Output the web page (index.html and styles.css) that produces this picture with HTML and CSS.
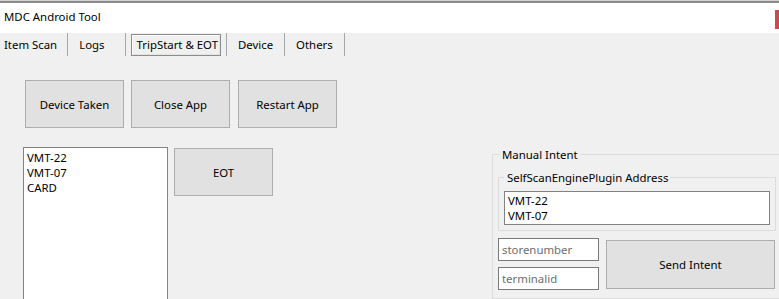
FILE: index.html
```html
<!DOCTYPE html>
<html>
<head>
<meta charset="utf-8">
<link rel="stylesheet" href="styles.css">
</head>
<body>
<div class="frame-top"></div>
<header class="titlebar">
  <span class="title">MDC Android Tool</span>
  <span class="marker"></span>
</header>
<nav class="tabs">
  <div class="tab tab-first">Item Scan</div>
  <div class="tab tab-logs">Logs</div>
  <div class="tab tab-sel"><span class="sel-box">TripStart &amp; EOT</span></div>
  <div class="tab">Device</div>
  <div class="tab">Others</div>
</nav>
<main class="page">
  <div class="btn-row">
    <button class="btn">Device Taken</button>
    <button class="btn">Close App</button>
    <button class="btn">Restart App</button>
  </div>
  <div class="lower">
    <div class="listbox list-main">
      <div>VMT-22</div>
      <div>VMT-07</div>
      <div>CARD</div>
    </div>
    <button class="btn btn-eot">EOT</button>
    <fieldset class="group">
      <legend class="legend">Manual Intent</legend>
      <fieldset class="subgroup">
        <legend class="legend sub-legend">SelfScanEnginePlugin Address</legend>
        <div class="listbox list-small">
          <div>VMT-22</div>
          <div>VMT-07</div>
        </div>
      </fieldset>
      <div class="intent-row">
        <div class="inputs">
          <input class="field" placeholder="storenumber">
          <input class="field" placeholder="terminalid">
        </div>
        <button class="btn btn-send">Send Intent</button>
      </div>
    </fieldset>
  </div>
</main>
</body>
</html>
```
FILE: styles.css
```css
html, body {
  margin: 0;
  padding: 0;
}
body {
  width: 779px;
  height: 299px;
  overflow: hidden;
  background: #f0f0f0;
  font-family: "Noto Sans", "Liberation Sans", sans-serif;
  font-size: 11.4px;
  color: #000;
}
.frame-top {
  height: 1px;
  background: #d2d2d2;
  border-bottom: 2px solid #8a8a8a;
}
.titlebar {
  height: 30px;
  background: #fff;
  display: flex;
  justify-content: space-between;
  align-items: flex-start;
}
.title {
  margin: 6px 0 0 4px;
  line-height: 16px;
}
.marker {
  width: 4px;
  height: 19px;
  margin-top: 7px;
  background: #c94c4c;
}
.tabs {
  height: 23px;
  display: flex;
}
.tab {
  padding: 0 11px;
  line-height: 23px;
  border-right: 1px solid #a7a7a7;
}
.tab-first {
  padding-left: 4px;
  padding-right: 10px;
}
.tab-logs {
  padding-right: 20px;
}
.tab-sel {
  padding: 1px 5px 0 5px;
  display: flex;
}
.sel-box {
  padding: 0 2px 0 5px;
  line-height: 19px;
  border: 1px solid #8c8c8c;
  box-shadow: inset 1px 1px 0 #fdfdfd, inset -1px -1px 0 #e3e3e3;
}
.page {
  padding-top: 24px;
}
.btn {
  box-sizing: border-box;
  width: 99px;
  height: 48px;
  padding: 0;
  margin: 0;
  background: #e1e1e1;
  border: 1px solid #adadad;
  font-family: inherit;
  font-size: 11.4px;
  color: #000;
}
.btn-row {
  display: flex;
  gap: 7px;
  margin-left: 25px;
}
.btn-row .btn:last-child {
  margin-left: 1px;
}
.lower {
  display: flex;
  align-items: flex-start;
  margin-top: 19px;
  padding-left: 23px;
}
.listbox {
  box-sizing: border-box;
  background: #fff;
  border: 1px solid #828282;
  line-height: 15px;
}
.list-main {
  width: 145px;
  height: 153px;
  padding: 1.5px 3px;
  flex-shrink: 0;
}
.btn-eot {
  margin: 1px 0 0 6px;
  flex-shrink: 0;
}
.group {
  box-sizing: border-box;
  flex-shrink: 0;
  width: 300px;
  margin: 0 0 0 219px;
  padding: 0 0 8px 5px;
  border: 1px solid #dcdcdc;
  min-width: 0;
}
.legend {
  padding: 0 2px;
  margin-left: 2px;
  line-height: 15px;
}
.subgroup {
  box-sizing: border-box;
  width: 278px;
  margin: 8px 0 0 0;
  padding: 0 5px 5px 5px;
  border: 1px solid #dcdcdc;
  min-width: 0;
}
.sub-legend {
  margin-left: 0;
  padding: 0 2px 0 3px;
}
.list-small {
  width: 266px;
  height: 34px;
  margin-top: 5.5px;
  padding: 1.5px 3px;
}
.intent-row {
  display: flex;
  align-items: flex-start;
  margin-top: 7px;
}
.inputs {
  display: flex;
  flex-direction: column;
  gap: 6px;
}
.field {
  box-sizing: border-box;
  width: 101px;
  height: 23px;
  margin: 0;
  padding: 0 3px;
  border: 1px solid #7a7a7a;
  background: #fff;
  font-family: inherit;
  font-size: 11.4px;
  outline: none;
}
.field::placeholder {
  color: #6d6d6d;
}
.btn-send {
  width: 169px;
  height: 49px;
  margin: 2px 0 0 7px;
}
```
